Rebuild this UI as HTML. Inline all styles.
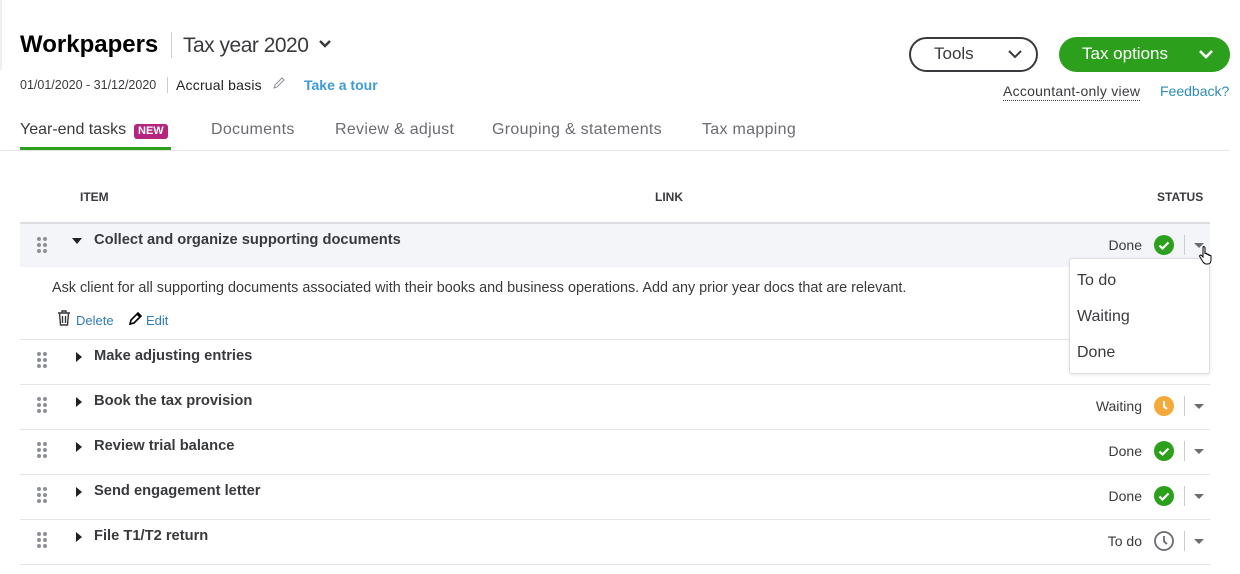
<!DOCTYPE html>
<html><head><meta charset="utf-8"><style>
*{margin:0;padding:0;box-sizing:border-box}
body{width:1240px;height:574px;background:#fff;font-family:"Liberation Sans",sans-serif;color:#393a3d;position:relative;overflow:hidden}
.a{position:absolute;white-space:nowrap}
.line{position:absolute;height:1px;background:#e3e5e8}
.title{font-weight:bold;font-size:14.7px;color:#393a3d}
.st{font-size:14px;color:#393a3d;text-align:right;width:100px}
.tab{font-size:16px;color:#6b6c72;letter-spacing:0.3px}
.dots{position:absolute;width:10px;height:16px}
.dots i{position:absolute;width:4px;height:4px;border-radius:50%;background:#8d9096}
</style></head><body>
<div class="a" style="left:0;top:0;width:2px;height:70px;background:#eee"></div>
<div class="a" style="left:20px;top:31px;font-size:24px;font-weight:bold;color:#000">Workpapers</div>
<div class="a" style="left:171px;top:32px;width:1px;height:26px;background:#ccc"></div>
<div class="a" style="left:183px;top:34px;font-size:21px;color:#393a3d;letter-spacing:-0.5px">Tax year 2020</div>
<svg class="a" style="left:318px;top:39px" width="14" height="10"><path d="M2 2l5 5 5-5" stroke="#393a3d" stroke-width="2.4" fill="none"/></svg>
<div class="a" style="left:20px;top:78px;font-size:12.5px;color:#393a3d">01/01/2020 - 31/12/2020</div>
<div class="a" style="left:167px;top:77px;width:1px;height:16px;background:#ccc"></div>
<div class="a" style="left:176px;top:77px;font-size:14px;color:#222;letter-spacing:0.2px">Accrual basis</div>
<svg class="a" style="left:272px;top:77px" width="13" height="13"><path d="M2 11l1-3 7-7 2 2-7 7z" stroke="#8d9096" stroke-width="1" fill="none"/></svg>
<div class="a" style="left:304px;top:77px;font-size:14px;font-weight:bold;color:#3d9ad6">Take a tour</div>

<div class="a" style="left:909px;top:37px;width:129px;height:35px;border:2px solid #393a3d;border-radius:18px"></div>
<div class="a" style="left:934px;top:44px;font-size:17px;color:#393a3d">Tools</div>
<svg class="a" style="left:1007px;top:49px" width="16" height="10"><path d="M2 2l6 6 6-6" stroke="#393a3d" stroke-width="2" fill="none"/></svg>
<div class="a" style="left:1059px;top:37px;width:171px;height:35px;background:#2ca01c;border-radius:18px"></div>
<div class="a" style="left:1082px;top:44px;font-size:17px;color:#fff">Tax options</div>
<svg class="a" style="left:1198px;top:49px" width="16" height="10"><path d="M2 2l6 6 6-6" stroke="#fff" stroke-width="2.6" fill="none"/></svg>
<div class="a" style="left:1003px;top:82px;font-size:14px;color:#393a3d;border-bottom:1px dotted #393a3d;line-height:18px;letter-spacing:0.25px">Accountant-only view</div>
<div class="a" style="left:1160px;top:83px;font-size:14px;color:#2e8bb8">Feedback?</div>

<div class="a tab" style="left:20px;top:121px;color:#393a3d;letter-spacing:0">Year-end tasks</div>
<div class="a" style="left:134px;top:124px;background:#b5257e;color:#fff;font-size:11px;font-weight:bold;padding:1px 4px;border-radius:3px;line-height:13px">NEW</div>
<div class="a tab" style="left:211px;top:121px">Documents</div>
<div class="a tab" style="left:335px;top:121px">Review &amp; adjust</div>
<div class="a tab" style="left:492px;top:121px">Grouping &amp; statements</div>
<div class="a tab" style="left:702px;top:121px">Tax mapping</div>
<div class="line" style="left:0;top:150px;width:1230px"></div>
<div class="a" style="left:20px;top:147px;width:151px;height:3px;background:#2ca01c"></div>

<div class="a" style="left:80px;top:190px;font-size:12px;font-weight:bold;color:#393a3d">ITEM</div>
<div class="a" style="left:655px;top:190px;font-size:12px;font-weight:bold;color:#393a3d">LINK</div>
<div class="a" style="left:1157px;top:190px;font-size:12px;font-weight:bold;color:#393a3d">STATUS</div>
<div class="a" style="left:20px;top:222px;width:1190px;height:2px;background:#dcdde0"></div>
<div class="a" style="left:20px;top:224px;width:1190px;height:43px;background:#f4f5f8"></div>

<div class="a" style="left:52px;top:280px;font-size:14.4px;color:#393a3d">Ask client for all supporting documents associated with their books and business operations. Add any prior year docs that are relevant.</div>
<svg class="a" style="left:56px;top:310px" width="16" height="17"><path d="M2 3h12M6 3V1h4v2M3.5 3l1 12h7l1-12M6.5 6v7M9.5 6v7" stroke="#393a3d" stroke-width="1.4" fill="none"/></svg>
<div class="a" style="left:76px;top:313px;font-size:13px;color:#2e7bb8">Delete</div>
<svg class="a" style="left:128px;top:311px" width="15" height="15"><path d="M2 13l1-4 7-7 3 3-7 7z M9 3l3 3" stroke="#000" stroke-width="1.6" fill="none"/></svg>
<div class="a" style="left:146px;top:313px;font-size:13px;color:#2e7bb8">Edit</div>

<div class="line" style="left:20px;top:339px;width:1190px"></div>
<div class="line" style="left:20px;top:384px;width:1190px"></div>
<div class="line" style="left:20px;top:429px;width:1190px"></div>
<div class="line" style="left:20px;top:474px;width:1190px"></div>
<div class="line" style="left:20px;top:519px;width:1190px"></div>
<div class="line" style="left:20px;top:564px;width:1190px"></div>

<div class="dots" style="left:37px;top:237px"><i style="left:0;top:0"></i><i style="left:6px;top:0"></i><i style="left:0;top:6px"></i><i style="left:6px;top:6px"></i><i style="left:0;top:12px"></i><i style="left:6px;top:12px"></i></div>
<div class="dots" style="left:37px;top:352px"><i style="left:0;top:0"></i><i style="left:6px;top:0"></i><i style="left:0;top:6px"></i><i style="left:6px;top:6px"></i><i style="left:0;top:12px"></i><i style="left:6px;top:12px"></i></div>
<div class="dots" style="left:37px;top:397px"><i style="left:0;top:0"></i><i style="left:6px;top:0"></i><i style="left:0;top:6px"></i><i style="left:6px;top:6px"></i><i style="left:0;top:12px"></i><i style="left:6px;top:12px"></i></div>
<div class="dots" style="left:37px;top:442px"><i style="left:0;top:0"></i><i style="left:6px;top:0"></i><i style="left:0;top:6px"></i><i style="left:6px;top:6px"></i><i style="left:0;top:12px"></i><i style="left:6px;top:12px"></i></div>
<div class="dots" style="left:37px;top:487px"><i style="left:0;top:0"></i><i style="left:6px;top:0"></i><i style="left:0;top:6px"></i><i style="left:6px;top:6px"></i><i style="left:0;top:12px"></i><i style="left:6px;top:12px"></i></div>
<div class="dots" style="left:37px;top:532px"><i style="left:0;top:0"></i><i style="left:6px;top:0"></i><i style="left:0;top:6px"></i><i style="left:6px;top:6px"></i><i style="left:0;top:12px"></i><i style="left:6px;top:12px"></i></div>

<svg class="a" style="left:71px;top:237px" width="12" height="8"><path d="M1 1h10L6 7z" fill="#222"/></svg>
<svg class="a" style="left:75px;top:351px" width="8" height="12"><path d="M1 1v10l6-5z" fill="#222"/></svg>
<svg class="a" style="left:75px;top:396px" width="8" height="12"><path d="M1 1v10l6-5z" fill="#222"/></svg>
<svg class="a" style="left:75px;top:441px" width="8" height="12"><path d="M1 1v10l6-5z" fill="#222"/></svg>
<svg class="a" style="left:75px;top:486px" width="8" height="12"><path d="M1 1v10l6-5z" fill="#222"/></svg>
<svg class="a" style="left:75px;top:531px" width="8" height="12"><path d="M1 1v10l6-5z" fill="#222"/></svg>

<div class="a title" style="left:94px;top:232px">Collect and organize supporting documents</div>
<div class="a title" style="left:94px;top:348px">Make adjusting entries</div>
<div class="a title" style="left:94px;top:393px">Book the tax provision</div>
<div class="a title" style="left:94px;top:438px">Review trial balance</div>
<div class="a title" style="left:94px;top:483px">Send engagement letter</div>
<div class="a title" style="left:94px;top:528px">File T1/T2 return</div>

<div class="a st" style="left:1042px;top:237px">Done</div>
<div class="a st" style="left:1042px;top:398px">Waiting</div>
<div class="a st" style="left:1042px;top:443px">Done</div>
<div class="a st" style="left:1042px;top:488px">Done</div>
<div class="a st" style="left:1042px;top:533px">To do</div>

<svg class="a" style="left:1153px;top:234px" width="22" height="22"><circle cx="11" cy="11" r="10" fill="#2ca01c"/><path d="M6.5 11.5l3 3 6-6" stroke="#fff" stroke-width="2.2" fill="none"/></svg>
<svg class="a" style="left:1153px;top:395px" width="22" height="22"><circle cx="11" cy="11" r="10" fill="#f4a93b"/><path d="M11 6v5.5l3 2.5" stroke="#fff" stroke-width="2" fill="none"/></svg>
<svg class="a" style="left:1153px;top:440px" width="22" height="22"><circle cx="11" cy="11" r="10" fill="#2ca01c"/><path d="M6.5 11.5l3 3 6-6" stroke="#fff" stroke-width="2.2" fill="none"/></svg>
<svg class="a" style="left:1153px;top:485px" width="22" height="22"><circle cx="11" cy="11" r="10" fill="#2ca01c"/><path d="M6.5 11.5l3 3 6-6" stroke="#fff" stroke-width="2.2" fill="none"/></svg>
<svg class="a" style="left:1153px;top:530px" width="22" height="22"><circle cx="11" cy="11" r="9" fill="none" stroke="#6b6c72" stroke-width="1.8"/><path d="M11 6v5.5l3 2.5" stroke="#6b6c72" stroke-width="1.8" fill="none"/></svg>

<div class="a" style="left:1184px;top:235px;width:1px;height:20px;background:#ccc"></div>
<div class="a" style="left:1184px;top:396px;width:1px;height:20px;background:#ccc"></div>
<div class="a" style="left:1184px;top:441px;width:1px;height:20px;background:#ccc"></div>
<div class="a" style="left:1184px;top:486px;width:1px;height:20px;background:#ccc"></div>
<div class="a" style="left:1184px;top:531px;width:1px;height:20px;background:#ccc"></div>

<svg class="a" style="left:1194px;top:243px" width="11" height="6"><path d="M0 0h10L5 5z" fill="#6b6c72"/></svg>
<svg class="a" style="left:1194px;top:404px" width="11" height="6"><path d="M0 0h10L5 5z" fill="#6b6c72"/></svg>
<svg class="a" style="left:1194px;top:449px" width="11" height="6"><path d="M0 0h10L5 5z" fill="#6b6c72"/></svg>
<svg class="a" style="left:1194px;top:494px" width="11" height="6"><path d="M0 0h10L5 5z" fill="#6b6c72"/></svg>
<svg class="a" style="left:1194px;top:539px" width="11" height="6"><path d="M0 0h10L5 5z" fill="#6b6c72"/></svg>

<div class="a" style="left:1069px;top:258px;width:141px;height:116px;background:#fff;border:1px solid #dcdde0;border-radius:3px;box-shadow:0 1px 3px rgba(0,0,0,.1)"></div>
<div class="a" style="left:1077px;top:272px;font-size:16px;color:#393a3d">To do</div>
<div class="a" style="left:1077px;top:308px;font-size:16px;color:#393a3d">Waiting</div>
<div class="a" style="left:1077px;top:344px;font-size:16px;color:#393a3d">Done</div>

<svg class="a" style="left:1199px;top:245px" width="16" height="20"><path d="M4 2c1-1 2 0 2 1v6c0-1 2-1 2 0v1c0-1 2-1 2 0v1c0-1 2-1 2 0v4c0 2-1 4-3 4H7c-1 0-2-1-3-2L1 12c-1-1 0-2 1-2l2 2z" fill="#fff" stroke="#000" stroke-width="1"/></svg>
</body></html>
